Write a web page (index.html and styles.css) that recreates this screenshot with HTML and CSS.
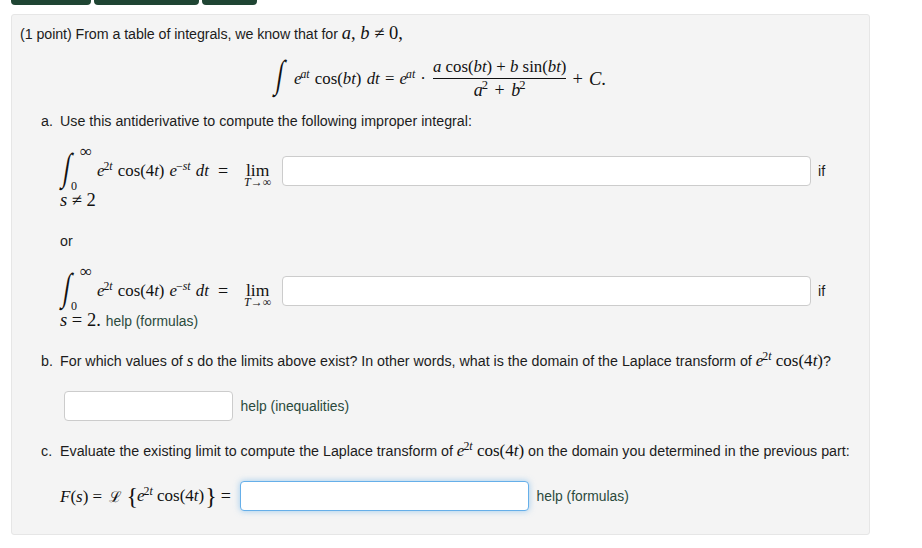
FILE: index.html
```html
<!DOCTYPE html>
<html lang="en">
<head>
<meta charset="utf-8">
<title>Problem</title>
<link rel="stylesheet" href="styles.css">
</head>
<body>
<nav class="tabs">
  <span class="tab tab-a"></span>
  <span class="tab tab-b"></span>
  <span class="tab tab-c"></span>
</nav>
<main class="panel">
  <p class="line lead">(1 point) From a table of integrals, we know that for <span class="m big"><i>a</i>, <i>b</i> ≠ 0,</span></p>
  <div class="display">
    <span class="m disp-math">
      <span class="int-wrap"><span class="int">∫</span></span>
      <span class="disp-text"><i>e</i><sup><i>at</i></sup> cos(<i>bt</i>) <i>dt</i> = <i>e</i><sup><i>at</i></sup> ·</span>
      <span class="frac">
        <span class="num"><i>a</i> cos(<i>bt</i>) + <i>b</i> sin(<i>bt</i>)</span>
        <span class="den"><i>a</i><sup>2</sup> + <i>b</i><sup>2</sup></span>
      </span>
      <span class="disp-end">+ <i>C</i>.</span>
    </span>
  </div>
  <section class="part">
    <p class="line"><span class="marker">a.</span>Use this antiderivative to compute the following improper integral:</p>
    <div class="row row-first">
      <span class="m calc">
        <span class="int-def"><span class="int-wrap"><span class="int">∫</span></span><span class="limits"><span class="upper">∞</span><span class="lower">0</span></span></span>
        <span class="integrand"><i>e</i><sup>2<i>t</i></sup> cos(4<i>t</i>) <i>e</i><sup>−<i>st</i></sup> <i>dt</i></span>
        <span class="eq">=</span>
        <span class="lim"><span>lim</span><small><i>T</i>→∞</small></span>
      </span>
      <input class="field field-wide" type="text" aria-label="limit one">
      <span class="after">if</span>
    </div>
    <p class="line tight"><span class="m big"><i>s</i> ≠ 2</span></p>
    <p class="line gap20 indented">or</p>
    <div class="row row-first">
      <span class="m calc">
        <span class="int-def"><span class="int-wrap"><span class="int">∫</span></span><span class="limits"><span class="upper">∞</span><span class="lower">0</span></span></span>
        <span class="integrand"><i>e</i><sup>2<i>t</i></sup> cos(4<i>t</i>) <i>e</i><sup>−<i>st</i></sup> <i>dt</i></span>
        <span class="eq">=</span>
        <span class="lim"><span>lim</span><small><i>T</i>→∞</small></span>
      </span>
      <input class="field field-wide" type="text" aria-label="limit two">
      <span class="after">if</span>
    </div>
    <p class="line tight"><span class="m big"><i>s</i> = 2.</span> <a class="help" href="#">help (formulas)</a></p>
  </section>
  <section class="part gap20">
    <p class="line"><span class="marker">b.</span>For which values of <span class="m"><i>s</i></span> do the limits above exist? In other words, what is the domain of the Laplace transform of <span class="m"><i>e</i><sup>2<i>t</i></sup> cos(4<i>t</i>)</span>?</p>
    <div class="row gap20">
      <input class="field field-short" type="text" aria-label="domain">
      <a class="help" href="#">help (inequalities)</a>
    </div>
  </section>
  <section class="part gap20">
    <p class="line"><span class="marker">c.</span>Evaluate the existing limit to compute the Laplace transform of <span class="m"><i>e</i><sup>2<i>t</i></sup> cos(4<i>t</i>)</span> on the domain you determined in the previous part:</p>
    <div class="row gap20">
      <span class="m fs"><span class="fs-head"><i>F</i>(<i>s</i>) = <span class="script">ℒ</span></span><span class="brace brace-open">{</span><span class="fs-body"><i>e</i><sup>2<i>t</i></sup> cos(4<i>t</i>)</span><span class="brace">}</span><span class="fs-eq">=</span></span>
      <input class="field field-focus" type="text" aria-label="transform">
      <a class="help" href="#">help (formulas)</a>
    </div>
  </section>
</main>
</body>
</html>
```
FILE: styles.css
```css
html, body { margin: 0; padding: 0; background: #fff; }
body { width: 922px; height: 548px; overflow: hidden; font-family: "Liberation Sans", Arial, sans-serif; font-size: 14.25px; color: #1c1c1c; }
.tabs { display: flex; gap: 3px; height: 5px; padding-left: 11px; }
.tab { display: block; height: 5px; background: #1f4533; border-radius: 0 0 4px 4px; }
.tab-a { width: 80px; }
.tab-b { width: 105px; }
.tab-c { width: 55px; }
.panel { box-sizing: border-box; width: 859px; height: 521px; margin: 9px 0 0 11px; padding: 9px 8px 0; background: #f4f4f4; border: 1px solid #e6e6e6; border-radius: 3px; }
p { margin: 0; }
.line { line-height: 20px; height: 20px; white-space: nowrap; }
.lead { letter-spacing: -.07px; }
.m { font-family: "Liberation Serif", "Times New Roman", serif; font-size: 17px; color: #111; }
.line .m { line-height: 0; letter-spacing: 0; }
.big { font-size: 18.5px; }
sup { font-size: 70%; line-height: 0; vertical-align: baseline; position: relative; top: -0.5em; margin-left: -1px; }
.display { height: 67px; padding-top: 3px; box-sizing: border-box; display: flex; align-items: center; justify-content: center; }
.disp-math { display: flex; align-items: center; font-size: 16.8px; white-space: pre; }
.disp-text { margin-left: 3px; word-spacing: 1px; }
.disp-end { margin-left: 6px; font-size: 18.5px; word-spacing: 1.5px; }
.int-wrap { display: block; width: 16px; height: 40px; flex: none; position: relative; overflow: visible; margin-top: -3px; }
.disp-math .int-wrap { margin-top: -5px; }
.int { position: absolute; left: 0; top: 0; width: 16px; height: 40px; line-height: 22px; font-size: 24px; text-align: center; transform-origin: center top; transform: scaleY(1.6) skewX(-14deg); }
.frac { display: inline-flex; flex-direction: column; align-items: stretch; text-align: center; margin-left: 7px; }
.num { border-bottom: 1px solid #111; padding-bottom: 1px; line-height: 20px; }
.den { line-height: 23px; font-size: 18px; word-spacing: 2px; }
.part { padding-left: 21px; }
.marker { display: inline-block; width: 19px; }
.row { display: flex; align-items: center; height: 30px; padding-left: 19px; white-space: nowrap; }
.row-first { margin-top: 25px; }
.tight { margin-top: 5px; padding-left: 19px; }
.gap20 { margin-top: 20px; }
.indented { padding-left: 19px; }
.calc { display: flex; align-items: center; width: 222px; font-size: 16.8px; flex: none; padding-left: 2px; box-sizing: border-box; }
.int-def { display: flex; align-items: center; width: 35px; height: 46px; flex: none; }
.limits { display: flex; flex-direction: column; justify-content: space-between; height: 46px; font-size: 12px; line-height: 12px; margin: -4px 0 0 -6px; }
.upper { margin-left: 8px; font-size: 17px; }
.lower { margin-left: -1px; }
.integrand { width: 121px; flex: none; word-spacing: 1px; }
.eq { width: 26px; flex: none; font-size: 18px; }
.lim { display: inline-flex; flex-direction: column; align-items: center; line-height: 15px; padding-top: 7px; font-size: 17.5px; }
.lim small { font-size: 12px; line-height: 9px; }
.field { box-sizing: border-box; height: 30px; padding: 0 8px; background: #fff; border: 1px solid #ccc; border-radius: 4px; outline: 0; flex: none; }
.field-wide { width: 529px; }
.field-short { width: 169px; margin-left: 4px; }
.field-focus { width: 289px; border-color: #66afe9; box-shadow: 0 0 6px rgba(102, 175, 233, .6); }
.after { margin-left: 7px; }
.help { color: #2b4a3c; text-decoration: none; margin-left: 7.5px; font-size: 13.85px; }
.tight .help { margin-left: 1px; }
.fs { display: inline-flex; align-items: center; width: 180px; flex: none; white-space: pre; font-size: 17px; }
.script { font-family: "DejaVu Serif", serif; font-size: 15px; margin-left: 3px; }
.brace { font-size: 24px; line-height: 20px; }
.brace-open { margin: 0 -2px 0 4px; }
.fs-body { margin: 0 1px; }
.fs-eq { margin-left: 4px; font-size: 18px; }
```
